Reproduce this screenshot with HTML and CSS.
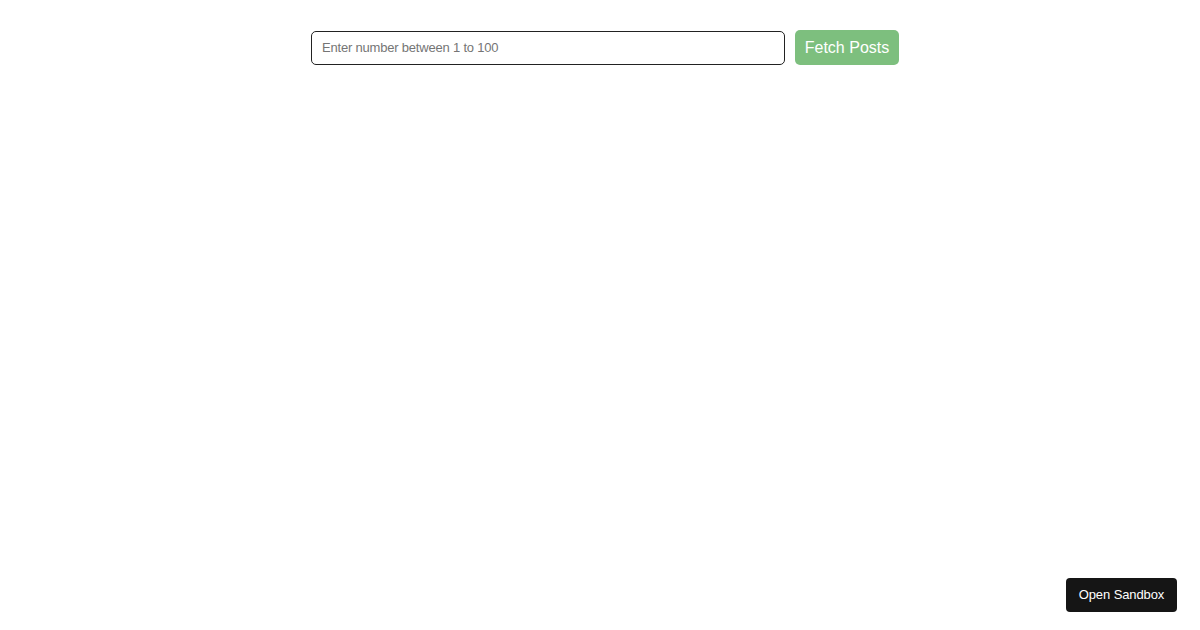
FILE: index.html
```html
<!DOCTYPE html>
<html>
<head>
<meta charset="utf-8">
<link rel="stylesheet" href="styles.css">
</head>
<body>
<div class="bar">
  <input class="num" type="text" placeholder="Enter number between 1 to 100">
  <button class="fetch">Fetch Posts</button>
</div>
<a class="sandbox">Open Sandbox</a>
</body>
</html>
```
FILE: styles.css
```css
html, body {
  margin: 0;
  padding: 0;
  background: #fff;
  font-family: "Liberation Sans", Arial, sans-serif;
}
.bar {
  display: flex;
  justify-content: center;
  align-items: center;
  gap: 10px;
  padding-top: 30px;
  padding-left: 10px;
}
.num {
  box-sizing: border-box;
  width: 474px;
  height: 34px;
  border: 1px solid #222;
  border-radius: 5px;
  padding: 0 10px 2px;
  font-family: "Liberation Sans", Arial, sans-serif;
  font-size: 13px;
  letter-spacing: -0.2px;
  color: #333;
  outline: none;
  margin-top: 1px;
}
.num::placeholder {
  color: #757575;
}
.fetch {
  box-sizing: border-box;
  width: 104px;
  height: 35px;
  border: none;
  border-radius: 5px;
  background: #7dbf7e;
  color: #fff;
  font-family: "Liberation Sans", Arial, sans-serif;
  font-size: 16px;
  padding: 0;
}
.sandbox {
  position: fixed;
  right: 23px;
  bottom: 18px;
  box-sizing: border-box;
  width: 111px;
  height: 34px;
  padding-bottom: 2px;
  display: flex;
  align-items: center;
  justify-content: center;
  background: #151515;
  color: #fff;
  border-radius: 4px;
  font-size: 13px;
  letter-spacing: -0.1px;
}
```
